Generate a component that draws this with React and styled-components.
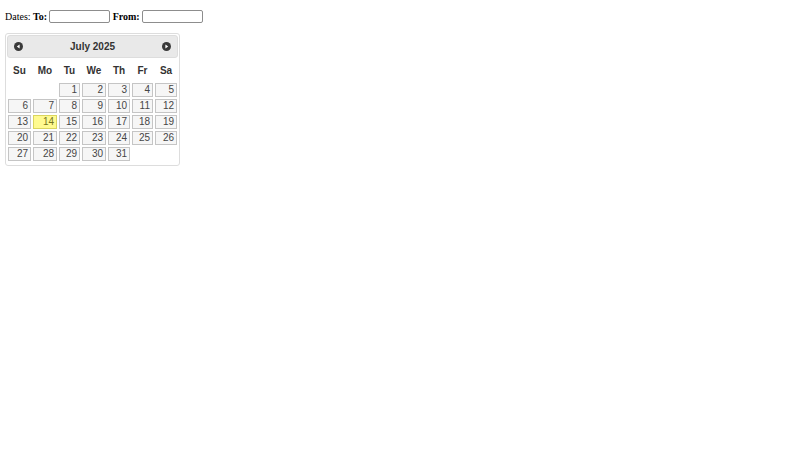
import React from "react";
import styled, { createGlobalStyle } from "styled-components";

const Global = createGlobalStyle`
  body { margin: 5px; background: #fff; font-family: "Liberation Serif", "Times New Roman", serif; font-size: 10px; color: #000; }
`;

const TopRow = styled.div`
  display: flex;
  align-items: center;
  height: 23px;
  white-space: pre;
`;

const Label = styled.span`
  font-weight: ${(p) => (p.$bold ? "bold" : "normal")};
`;

const Input = styled.input`
  box-sizing: border-box;
  width: 61px;
  height: 13px;
  margin: 0 0 0 2px;
  padding: 0;
  border: 1px solid #8d8d8d;
  border-radius: 2px;
  background: #fff;
  font-size: 8px;
`;

const Picker = styled.div`
  box-sizing: border-box;
  width: 175px;
  margin-top: 5px;
  padding: 1px 1px 4px;
  border: 1px solid #dddddd;
  border-radius: 3px;
  background: #fff;
  font-family: "Liberation Sans", Arial, sans-serif;
  font-size: 10px;
`;

const Header = styled.div`
  box-sizing: border-box;
  height: 23px;
  display: flex;
  align-items: center;
  justify-content: space-between;
  padding: 0 6px;
  border: 1px solid #dddddd;
  border-radius: 3px;
  background: #e9e9e9;
`;

const Title = styled.div`
  font-weight: bold;
  color: #333333;
`;

const NavButton = styled.span`
  display: flex;
  width: 9px;
  height: 9px;
`;

const cols = "23px 24px 21px 24px 22px 21px 22px";

const DayNames = styled.div`
  display: grid;
  grid-template-columns: ${cols};
  column-gap: 2px;
  padding-left: 1px;
  height: 24px;
  align-items: center;
`;

const DayName = styled.div`
  text-align: center;
  font-weight: bold;
  color: #333333;
`;

const Days = styled.div`
  display: grid;
  grid-template-columns: ${cols};
  grid-auto-rows: 14px;
  column-gap: 2px;
  row-gap: 2px;
  padding-left: 1px;
  margin-top: 1px;
`;

const Cell = styled.div`
  box-sizing: border-box;
  border: 1px solid ${(p) => (p.$today ? "#dad55e" : "#c5c5c5")};
  background: ${(p) => (p.$today ? "#fffa90" : "#f6f6f6")};
  color: ${(p) => (p.$today ? "#777620" : "#454545")};
  text-align: right;
  padding-right: 2px;
  line-height: 12px;
`;

const Empty = styled.div``;

const Arrow = ({ dir }) => (
  <NavButton>
    <svg width="9" height="9" viewBox="0 0 9 9">
      <circle cx="4.5" cy="4.5" r="4.5" fill="#3a3a3a" />
      {dir === "prev" ? (
        <polygon points="5.6,2.4 5.6,6.6 2.8,4.5" fill="#fff" />
      ) : (
        <polygon points="3.4,2.4 3.4,6.6 6.2,4.5" fill="#fff" />
      )}
    </svg>
  </NavButton>
);

const names = ["Su", "Mo", "Tu", "We", "Th", "Fr", "Sa"];

export default function App() {
  const cells = [];
  for (let i = 0; i < 2; i++) cells.push(<Empty key={"e" + i} />);
  for (let d = 1; d <= 31; d++)
    cells.push(
      <Cell key={d} $today={d === 14}>
        {d}
      </Cell>
    );
  return (
    <>
      <Global />
      <TopRow>
        <Label>Dates: </Label>
        <Label $bold>To:</Label>
        <Input type="text" />
        <Label $bold> From:</Label>
        <Input type="text" />
      </TopRow>
      <Picker>
        <Header>
          <Arrow dir="prev" />
          <Title>July 2025</Title>
          <Arrow dir="next" />
        </Header>
        <DayNames>
          {names.map((n) => (
            <DayName key={n}>{n}</DayName>
          ))}
        </DayNames>
        <Days>{cells}</Days>
      </Picker>
    </>
  );
}
